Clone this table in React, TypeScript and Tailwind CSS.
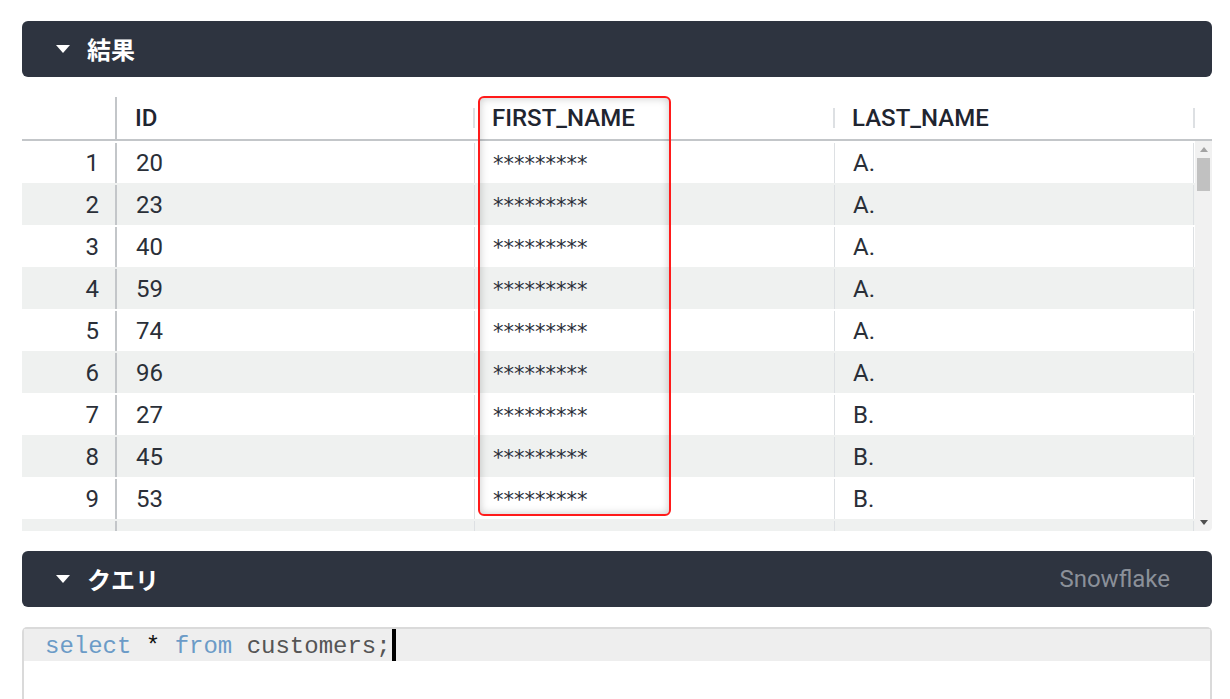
import React from "react";

const rows: [string, string, string][] = [
  ["1", "20", "A."],
  ["2", "23", "A."],
  ["3", "40", "A."],
  ["4", "59", "A."],
  ["5", "74", "A."],
  ["6", "96", "A."],
  ["7", "27", "B."],
  ["8", "45", "B."],
  ["9", "53", "B."],
  ["", "", ""],
];

function Tri() {
  return (
    <svg width="14" height="8" viewBox="0 0 14 8" className="block">
      <path d="M0 0 L14 0 L7 8 Z" fill="#ffffff" />
    </svg>
  );
}

function Bar({ title, right }: { title: string; right?: string }) {
  return (
    <div className="flex h-[56px] items-center rounded-[6px] bg-[#2e3440] pl-[34px] pr-[42px]">
      <Tri />
      <span
        className="ml-[17px] text-[24px] font-bold text-white"
        style={{ fontFamily: '"Noto Sans CJK JP", "Noto Sans", sans-serif' }}
      >
        {title}
      </span>
      <div className="flex-1" />
      {right && (
        <span className="text-[24px] text-[#8b9099]" style={{ fontFamily: "Roboto, sans-serif" }}>
          {right}
        </span>
      )}
    </div>
  );
}

export default function App() {
  return (
    <div
      className="min-h-[699px] bg-white pl-[22px] pr-[18px] pt-[21px]"
      style={{ fontFamily: "Roboto, 'Noto Sans', sans-serif" }}
    >
      <Bar title="結果" />
      <div className="relative mt-[20px]">
        {/* header */}
        <div className="flex h-[44px] border-b-2 border-[#c3c6c9] text-[24px] font-medium text-[#1f2530]">
          <div className="w-[95px] border-r-2 border-[#c3c6c9]" />
          <div className="flex w-[358px] items-center justify-between pl-[18px]">
            <span>ID</span>
            <span className="h-[20px] w-[2px] bg-[#dde0e3]" />
          </div>
          <div className="flex w-[360px] items-center justify-between pl-[17px]">
            <span>FIRST_NAME</span>
            <span className="h-[20px] w-[2px] bg-[#dde0e3]" />
          </div>
          <div className="flex w-[360px] items-center justify-between pl-[17px]">
            <span>LAST_NAME</span>
            <span className="h-[20px] w-[2px] bg-[#dde0e3]" />
          </div>
          <div className="flex-1" />
        </div>
        {/* body */}
        <div className="flex h-[390px] overflow-hidden">
          <div className="w-[1173px] text-[24px] text-[#2a2f38]">
            {rows.map(([n, id, ln], i) => (
              <div
                key={i}
                className={`flex h-[42px] items-center pt-[2px] ${i % 2 === 1 ? "bg-[#eff1f0]" : "bg-white"}`}
              >
                <div className="flex h-full w-[95px] items-center justify-end border-r-2 border-[#c3c6c9] pr-[16px]">
                  {n}
                </div>
                <div className="flex h-full w-[358px] items-center border-r border-[#dde0e3] pl-[19px]">{id}</div>
                <div
                  className="flex h-full w-[360px] items-center border-r border-[#dde0e3] pl-[18px] pt-[4px] text-[21px]"
                  style={{ fontFamily: "'DejaVu Sans', sans-serif" }}
                >
                  {n ? "*********" : ""}
                </div>
                <div className="flex h-full w-[359px] items-center border-r border-[#dde0e3] pl-[18px]">{ln}</div>
              </div>
            ))}
          </div>
          <div className="relative flex w-[17px] flex-col items-center rounded-br-[4px] bg-[#f1f1f1]">
            <svg width="8" height="5" viewBox="0 0 8 5" className="mt-[6px]">
              <path d="M0 5 L8 5 L4 0 Z" fill="#a3a3a3" />
            </svg>
            <div className="mt-[6px] h-[33px] w-[13px] bg-[#c1c1c1]" />
            <div className="flex-1" />
            <svg width="8" height="5" viewBox="0 0 8 5" className="mb-[6px]">
              <path d="M0 0 L8 0 L4 5 Z" fill="#505050" />
            </svg>
          </div>
        </div>
        {/* red highlight */}
        <div className="absolute left-[456px] top-[-1px] h-[420px] w-[193px] rounded-[6px] border-2 border-[#ff1a1a] shadow-[inset_0_0_8px_rgba(0,0,0,0.22)]" />
      </div>
      <div className="mt-[20px]">
        <Bar title="クエリ" right="Snowflake" />
      </div>
      <div className="mt-[20px] h-[80px] rounded-t-[5px] border-2 border-b-0 border-[#dadada]">
        <div
          className="flex h-[32px] items-center bg-[#eeeeee] pl-[21px] pt-[4px] text-[24px]"
          style={{ fontFamily: "'Liberation Mono', 'DejaVu Sans Mono', monospace" }}
        >
          <span className="text-[#6b9bc7]">select</span>
          <span className="whitespace-pre text-[#111]"> * </span>
          <span className="text-[#6b9bc7]">from</span>
          <span className="whitespace-pre text-[#555]"> customers;</span>
          <span className="ml-[1px] mt-[-4px] h-[32px] w-[4px] bg-black" />
        </div>
      </div>
    </div>
  );
}
